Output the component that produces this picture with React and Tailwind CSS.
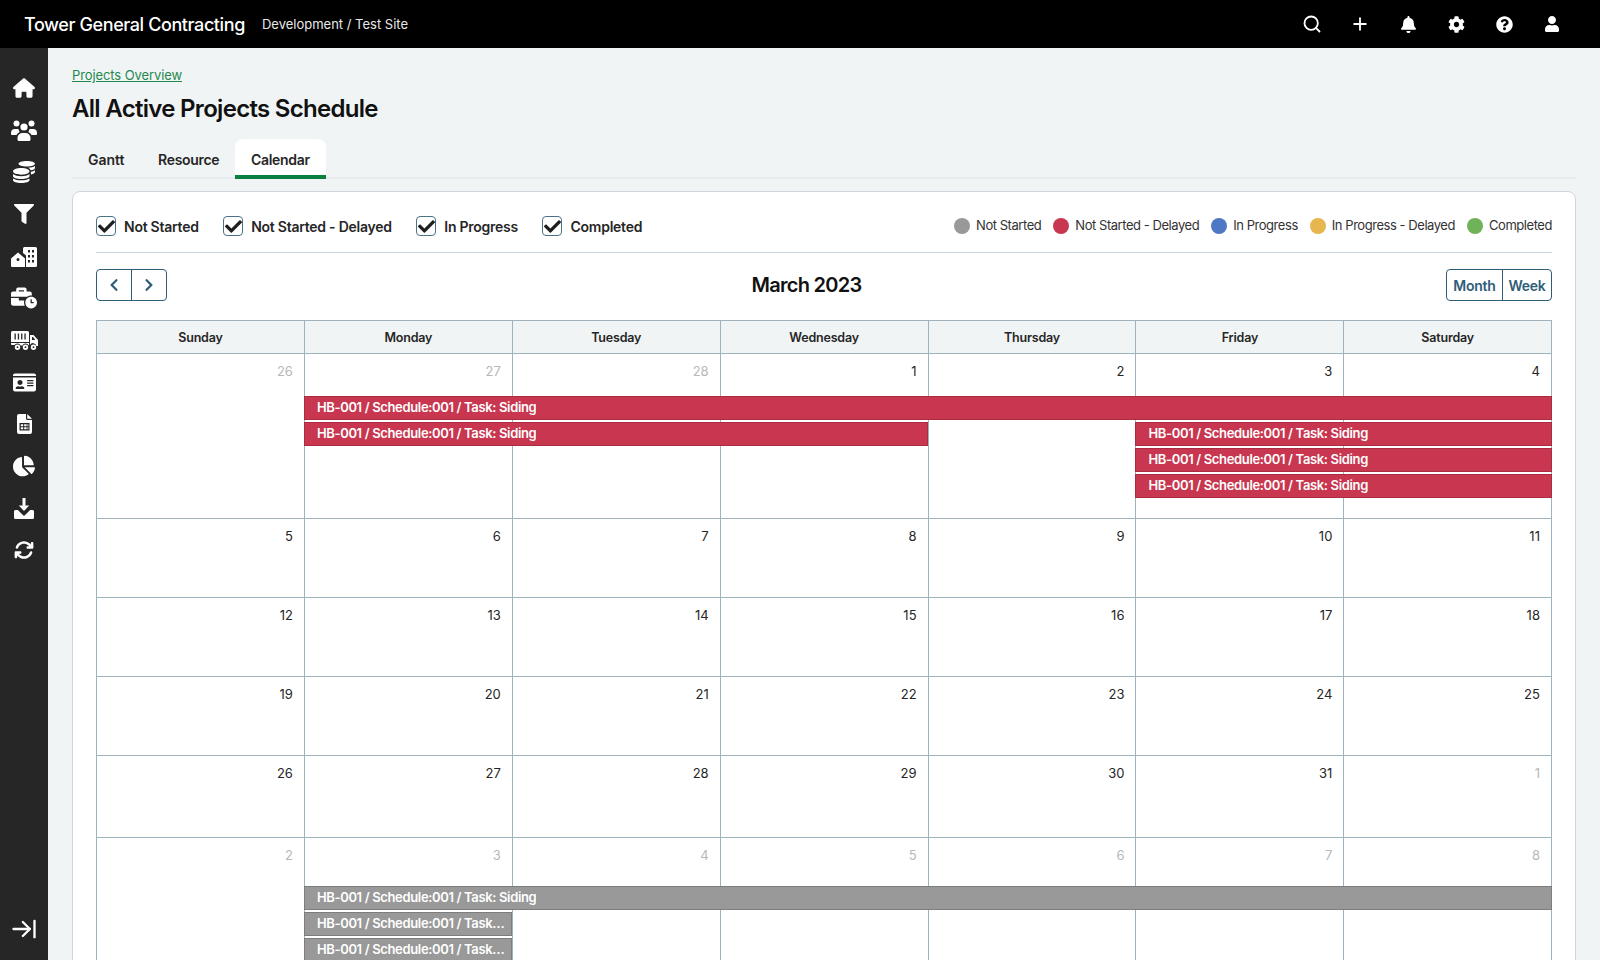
import React from "react";
import { FaCoins, FaFilter, FaBusinessTime, FaIdCard, FaChartPie, FaBell, FaCog, FaQuestionCircle, FaUser, FaCheck, FaChevronLeft, FaChevronRight } from "react-icons/fa";
import { FaHouse, FaArrowsRotate } from "react-icons/fa6";
import { Search, Plus, ArrowRightToLine } from "lucide-react";

const People = () => (
  <svg viewBox="0 0 26 21" className="w-[26px] h-[21px]" fill="currentColor">
    <circle cx="5.500" cy="3.500" r="3" />
    <circle cx="20.500" cy="3.500" r="3" />
    <circle cx="13" cy="7" r="3.600" />
    <path d="M0 13a4 4 0 0 1 4-4h3.500a5 5 0 0 0 1.200 3A6 6 0 0 0 5.500 15H1a1 1 0 0 1-1-1Z" />
    <path d="M26 13a4 4 0 0 0-4-4h-3.500a5 5 0 0 1-1.200 3 6 6 0 0 1 3.200 3H25a1 1 0 0 0 1-1Z" />
    <path d="M6.500 18a5 5 0 0 1 5-5h3a5 5 0 0 1 5 5v1.500a1.500 1.500 0 0 1-1.500 1.500H8a1.500 1.500 0 0 1-1.500-1.500Z" />
  </svg>
);
const HouseBuilding = () => (
  <svg viewBox="0 0 26 22" className="w-[26px] h-[22px]" fill="currentColor">
    <path fillRule="evenodd" d="M12 3.500A1.500 1.500 0 0 1 13.500 2h11A1.500 1.500 0 0 1 26 3.500v17a1.500 1.500 0 0 1-1.500 1.500H15V10.500L12 8ZM17 5h2v2.500h-2Zm4 0h2v2.500h-2Zm-4 5h2v2.500h-2Zm4 0h2v2.500h-2Zm-4 5h2v2.500h-2Zm4 0h2v2.500h-2Z" />
    <path fillRule="evenodd" d="M0 13.500 7 7.500l7 6V22H1a1 1 0 0 1-1-1ZM5.500 14.500a1.500 1.500 0 1 0 3 0 1.500 1.500 0 1 0-3 0Z" />
  </svg>
);
const TruckContainer = () => (
  <svg viewBox="0 0 27 19" className="w-[27px] h-[19px]" fill="currentColor">
    <path fillRule="evenodd" d="M1.500 0h15A1.500 1.500 0 0 1 18 1.500V11H0V1.500A1.500 1.500 0 0 1 1.500 0ZM3.500 2.500v6h1.300v-6Zm3.300 0v6h1.300v-6Zm3.300 0v6h1.300v-6Zm3.300 0v6h1.300v-6Z" />
    <path fillRule="evenodd" d="M19 4h3.500l4.500 5v6h-1.600a3.400 3.400 0 0 0-6.400-1ZM21 6v3h3.300L22 6Z" />
    <path d="M0 12h18v2h-.500a3.400 3.400 0 0 0-6 .500h-2a3.400 3.400 0 0 0-6-.500H1a1 1 0 0 1-1-1Z" />
    <path fillRule="evenodd" d="M6.500 13.500a2.700 2.700 0 1 0 0 5.400 2.700 2.700 0 0 0 0-5.400Zm0 1.800a.9.900 0 1 1 0 1.800.9.900 0 0 1 0-1.800ZM14.500 13.500a2.700 2.700 0 1 0 0 5.400 2.700 2.700 0 0 0 0-5.400Zm0 1.800a.9.900 0 1 1 0 1.800.9.900 0 0 1 0-1.800ZM22.500 13.500a2.700 2.700 0 1 0 0 5.400 2.700 2.700 0 0 0 0-5.400Zm0 1.800a.9.900 0 1 1 0 1.800.9.900 0 0 1 0-1.800Z" />
  </svg>
);
const FileTable = () => (
  <svg viewBox="0 0 15 20" className="w-[15px] h-[20px]" fill="currentColor">
    <path fillRule="evenodd" d="M2 0h7v4.500A1.500 1.500 0 0 0 10.500 6H15v12a2 2 0 0 1-2 2H2a2 2 0 0 1-2-2V2a2 2 0 0 1 2-2Zm.500 9v7.500h10V9Zm1.300 1.200h2.400v2H3.800Zm3.400 0h2.400v2H7.200Zm3.200 0h1v2h-1ZM3.800 13.300h2.400v2H3.800Zm3.400 0h2.400v2H7.200Zm3.200 0h1v2h-1Z" />
    <path d="M10.200 0 15 4.800h-4.500a.3.300 0 0 1-.3-.3Z" />
  </svg>
);
const InboxIn = () => (
  <svg viewBox="0 0 20 21" className="w-[20px] h-[21px]" fill="currentColor">
    <path d="M8.500 0h3v7.500h3.700L10 13 4.800 7.500h3.700Z" />
    <path d="M0 13.500a1.500 1.500 0 0 1 1.500-1.500h2.300L10 18l6.200-6h2.300a1.500 1.500 0 0 1 1.500 1.500V19.500a1.500 1.500 0 0 1-1.500 1.500h-17A1.500 1.500 0 0 1 0 19.500Z" />
  </svg>
);

const sideIcons = [
  <FaHouse className="text-[22px]" />,
  <People />,
  <FaCoins className="text-[22px]" />,
  <FaFilter className="text-[20px]" />,
  <HouseBuilding />,
  <FaBusinessTime className="text-[26px]" />,
  <TruckContainer />,
  <FaIdCard className="text-[23px]" />,
  <FileTable />,
  <FaChartPie className="text-[22px]" />,
  <InboxIn />,
  <FaArrowsRotate className="text-[20px]" />,
];

const days = ["Sunday", "Monday", "Tuesday", "Wednesday", "Thursday", "Friday", "Saturday"];
const colStart = ["col-start-1", "col-start-2", "col-start-3", "col-start-4", "col-start-5", "col-start-6", "col-start-7"];
const colSpan = { 1: "col-span-1", 2: "col-span-2", 3: "col-span-3", 6: "col-span-6" };
const rowStart = { 2: "row-start-2", 3: "row-start-3", 4: "row-start-4", 5: "row-start-5" };

const weeks = [
  {
    h: "h-[165px]",
    rows: "grid-rows-[42px_26px_26px_26px_26px_1fr]",
    dates: [[26, 1], [27, 1], [28, 1], [1], [2], [3], [4]],
    bars: [
      { r: 2, c: 1, s: 6, red: true, t: "HB-001 / Schedule:001 / Task: Siding" },
      { r: 3, c: 1, s: 3, red: true, t: "HB-001 / Schedule:001 / Task: Siding" },
      { r: 3, c: 5, s: 2, red: true, t: "HB-001 / Schedule:001 / Task: Siding" },
      { r: 4, c: 5, s: 2, red: true, t: "HB-001 / Schedule:001 / Task: Siding" },
      { r: 5, c: 5, s: 2, red: true, t: "HB-001 / Schedule:001 / Task: Siding" },
    ],
  },
  { h: "h-[79px]", rows: "grid-rows-[1fr]", dates: [[5], [6], [7], [8], [9], [10], [11]], bars: [] },
  { h: "h-[79px]", rows: "grid-rows-[1fr]", dates: [[12], [13], [14], [15], [16], [17], [18]], bars: [] },
  { h: "h-[79px]", rows: "grid-rows-[1fr]", dates: [[19], [20], [21], [22], [23], [24], [25]], bars: [] },
  { h: "h-[82px]", rows: "grid-rows-[1fr]", dates: [[26], [27], [28], [29], [30], [31], [1, 1]], bars: [] },
  {
    h: "h-[165px]",
    rows: "grid-rows-[48px_26px_26px_26px_26px_1fr]",
    dates: [[2, 1], [3, 1], [4, 1], [5, 1], [6, 1], [7, 1], [8, 1]],
    bars: [
      { r: 2, c: 1, s: 6, t: "HB-001 / Schedule:001 / Task: Siding" },
      { r: 3, c: 1, s: 1, t: "HB-001 / Schedule:001 / Task: Siding" },
      { r: 4, c: 1, s: 1, t: "HB-001 / Schedule:001 / Task: Siding" },
    ],
  },
];

function Check({ label }) {
  return (
    <label className="flex items-center gap-2">
      <span className="w-5 h-5 rounded-[4px] border border-[#4c7288] bg-white flex items-center justify-center">
        <FaCheck className="text-[17px] text-[#1f1f1f]" />
      </span>
      <span className="text-[14px] font-semibold text-[#262626] tracking-[-0.25px]">{label}</span>
    </label>
  );
}

function Legend({ color, label }) {
  return (
    <div className="flex items-center gap-[6px]">
      <span className={`w-4 h-4 rounded-full ${color}`} />
      <span className="text-[13px] text-[#333] tracking-[-0.45px]">{label}</span>
    </div>
  );
}

export default function App() {
  return (
    <div className="w-[1600px] h-[960px] overflow-hidden flex flex-col bg-[#f1f4f5] font-['Inter',sans-serif] text-[#262626]">
      <header className="h-12 shrink-0 bg-black text-white flex items-center pl-6 pr-6">
        <span className="text-[18px] font-medium tracking-[-0.4px]">Tower General Contracting</span>
        <span className="ml-[17px] pt-[2px] text-[13px] text-[#e8e8e8]">Development / Test Site</span>
        <div className="ml-auto flex items-center">
          <span className="w-12 flex justify-center"><Search size={20} strokeWidth={2.2} /></span>
          <span className="w-12 flex justify-center"><Plus size={20} strokeWidth={2.2} /></span>
          <span className="w-12 flex justify-center"><FaBell className="text-[17px]" /></span>
          <span className="w-12 flex justify-center"><FaCog className="text-[17px]" /></span>
          <span className="w-12 flex justify-center"><FaQuestionCircle className="text-[17px]" /></span>
          <span className="w-12 flex justify-center"><FaUser className="text-[16px]" /></span>
        </div>
      </header>
      <div className="flex flex-1 min-h-0">
        <aside className="w-12 shrink-0 bg-[#262626] text-white flex flex-col items-center pt-[19px] pb-[19px]">
          {sideIcons.map((ic, i) => (
            <div key={i} className="h-[42px] w-full flex items-center justify-center">{ic}</div>
          ))}
          <div className="mt-auto h-6 flex items-center"><ArrowRightToLine size={28} strokeWidth={2} /></div>
        </aside>
        <main className="flex-1 min-w-0 pl-6 pr-6 pt-[18px]">
          <a className="block text-[13px] leading-[18px] text-[#1f8a50] underline tracking-[-0.1px]">Projects Overview</a>
          <h1 className="mt-[9px] text-[24px] leading-[32px] font-semibold text-[#111] tracking-[-0.7px]">All Active Projects Schedule</h1>
          <div className="mt-[14px] h-10 border-b-2 border-[#e6eaec] flex text-[14px] font-semibold text-[#262626]">
            <div className="h-10 w-[70px] pl-4 flex items-center">Gantt</div>
            <div className="h-10 w-[93px] pl-4 flex items-center tracking-[-0.3px]">Resource</div>
            <div className="h-10 w-[91px] pl-4 pt-1 flex items-center bg-white rounded-t-lg border-b-4 border-[#0b7f3f] tracking-[-0.3px]">Calendar</div>
          </div>
          <section className="mt-3 bg-white border border-[#cdd7dd] rounded-t-lg px-[23px] pt-[14px]">
            <div className="flex items-center justify-between h-10 pb-[6px] border-b border-[#cdd7dd] box-content">
              <div className="flex items-center gap-[24.5px]">
                <Check label="Not Started" />
                <Check label="Not Started - Delayed" />
                <Check label="In Progress" />
                <Check label="Completed" />
              </div>
              <div className="flex items-center gap-3">
                <Legend color="bg-[#999999]" label="Not Started" />
                <Legend color="bg-[#c8374f]" label="Not Started - Delayed" />
                <Legend color="bg-[#4f78c4]" label="In Progress" />
                <Legend color="bg-[#e8b64f]" label="In Progress - Delayed" />
                <Legend color="bg-[#70b25a]" label="Completed" />
              </div>
            </div>
            <div className="mt-4 h-8 flex items-center justify-between">
              <div className="flex h-8 border border-[#2f5d78] rounded text-[#2f5d78]">
                <span className="w-[35px] flex items-center justify-center border-r border-[#2f5d78]"><FaChevronLeft className="text-[14px]" /></span>
                <span className="w-[34px] flex items-center justify-center"><FaChevronRight className="text-[14px]" /></span>
              </div>
              <h2 className="text-[20px] font-semibold text-[#111] tracking-[-0.7px]">March 2023</h2>
              <div className="flex h-8 border border-[#2f5d78] rounded text-[#2f5d78] text-[14px] font-semibold tracking-[-0.25px]">
                <span className="w-[56px] flex items-center justify-center border-r border-[#2f5d78]">Month</span>
                <span className="w-[48px] flex items-center justify-center">Week</span>
              </div>
            </div>
            <div className="mt-[19px] border-t border-[#9fb3bf] w-[1456px]">
              <div className="grid grid-cols-[repeat(6,207.9px)_208.6px] h-[33px] bg-[#f1f4f5]">
                {days.map((d, j) => (
                  <div key={d} className={`flex items-center justify-center pt-[2px] text-[12.5px] font-semibold text-[#262626] border-l border-b border-[#9fb3bf] tracking-[-0.2px] ${j === 6 ? "border-r" : ""}`}>{d}</div>
                ))}
              </div>
              {weeks.map((w, i) => (
                <div key={i} className={`grid grid-cols-[repeat(6,207.9px)_208.6px] ${w.h} ${w.rows}`}>
                  {w.dates.map(([n, muted], j) => (
                    <div key={j} className={`${colStart[j]} row-start-1 row-end-7 border-l border-b border-[#9fb3bf] pt-[8px] pr-[11px] text-right text-[13px] leading-[18px] ${j === 6 ? "border-r" : ""} ${muted ? "text-[#b8b8b8]" : "text-[#262626]"}`}>{n}</div>
                  ))}
                  {w.bars.map((b, k) => (
                    <div key={k} className={`${colStart[b.c]} ${colSpan[b.s]} ${rowStart[b.r]} h-6 min-w-0 pl-[12px] pr-[5px] flex items-center border ${b.red ? "bg-[#c8374f] border-[#a92c41]" : "bg-[#999999] border-[#7d7d7d]"} text-white text-[13px] font-semibold tracking-[-0.35px]`}>
                      <span className="truncate">{b.t}</span>
                    </div>
                  ))}
                </div>
              ))}
            </div>
          </section>
        </main>
      </div>
    </div>
  );
}
